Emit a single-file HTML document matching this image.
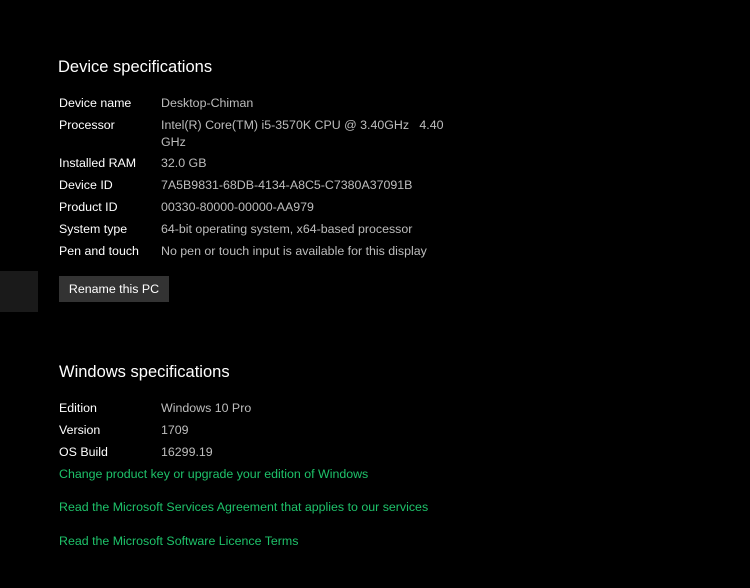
<!DOCTYPE html>
<html><head><style>
body{margin:0;width:750px;height:588px;background:#000;position:relative;overflow:hidden;font-family:"Liberation Sans",sans-serif;}
div{position:absolute;white-space:nowrap;}
.h{font-size:16.5px;color:#fff;}
.l{left:59px;font-size:12.4px;color:#fff;}
.v{left:161px;font-size:12.4px;color:#bdbdbd;}
.g{left:59px;font-size:12.4px;color:#1ec26a;}
</style></head><body>
<div style="left:0;top:271px;width:38px;height:41px;background:#1a1a1a"></div>
<div class="h" style="left:58px;top:58px">Device specifications</div>
<div class="l" style="top:96px">Device name</div><div class="v" style="top:96px">Desktop-Chiman</div>
<div class="l" style="top:118px">Processor</div><div class="v" style="top:118px">Intel(R) Core(TM) i5-3570K CPU @ 3.40GHz &nbsp; 4.40</div>
<div class="v" style="top:135px">GHz</div>
<div class="l" style="top:156px">Installed RAM</div><div class="v" style="top:156px">32.0 GB</div>
<div class="l" style="top:178px">Device ID</div><div class="v" style="top:178px">7A5B9831-68DB-4134-A8C5-C7380A37091B</div>
<div class="l" style="top:200px">Product ID</div><div class="v" style="top:200px">00330-80000-00000-AA979</div>
<div class="l" style="top:222px">System type</div><div class="v" style="top:222px">64-bit operating system, x64-based processor</div>
<div class="l" style="top:244px">Pen and touch</div><div class="v" style="top:244px">No pen or touch input is available for this display</div>
<div style="left:59px;top:276px;width:110px;height:26px;background:#333;color:#fff;font-size:12.4px;line-height:26px;text-align:center">Rename this PC</div>
<div class="h" style="left:59px;top:363px">Windows specifications</div>
<div class="l" style="top:401px">Edition</div><div class="v" style="top:401px">Windows 10 Pro</div>
<div class="l" style="top:423px">Version</div><div class="v" style="top:423px">1709</div>
<div class="l" style="top:445px">OS Build</div><div class="v" style="top:445px">16299.19</div>
<div class="g" style="top:467px">Change product key or upgrade your edition of Windows</div>
<div class="g" style="top:500px">Read the Microsoft Services Agreement that applies to our services</div>
<div class="g" style="top:534px">Read the Microsoft Software Licence Terms</div>
</body></html>
